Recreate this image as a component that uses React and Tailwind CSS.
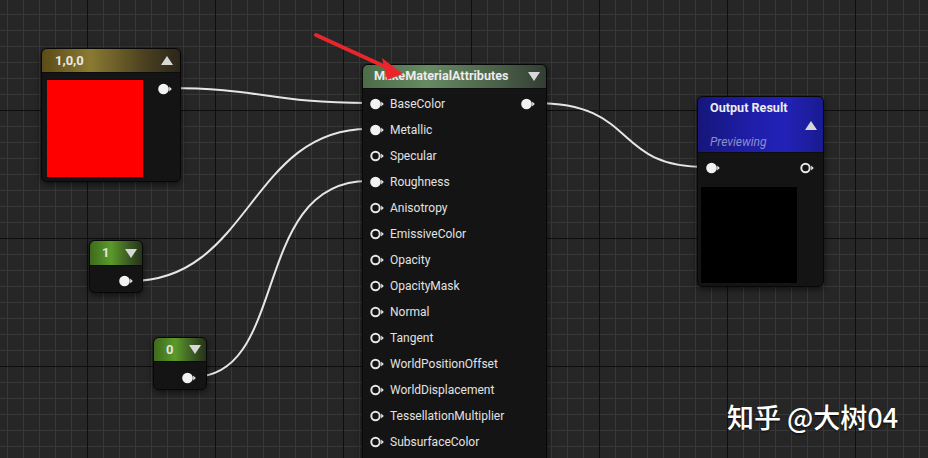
import React from "react";

const font = { fontFamily: "Roboto, 'Noto Sans', sans-serif" };

function Pin({ hollow = false }) {
  return (
    <svg width="15" height="12" viewBox="0 0 15 12" className="shrink-0">
      {hollow ? (
        <circle cx="5.5" cy="6" r="4.2" fill="none" stroke="#e6e6e6" strokeWidth="2" />
      ) : (
        <circle cx="5.5" cy="6" r="5.3" fill="#f2f2f2" />
      )}
      <polygon points="11.2,3.6 13.8,6 11.2,8.4" fill="#e6e6e6" />
    </svg>
  );
}

function Tri({ up = false }) {
  return (
    <svg width="12" height="9" viewBox="0 0 12 9">
      {up ? (
        <polygon points="6,0 12,9 0,9" fill="#d8d8d8" />
      ) : (
        <polygon points="0,0 12,0 6,9" fill="#d8d8d8" />
      )}
    </svg>
  );
}

const inputs = [
  ["BaseColor", false],
  ["Metallic", false],
  ["Specular", true],
  ["Roughness", false],
  ["Anisotropy", true],
  ["EmissiveColor", true],
  ["Opacity", true],
  ["OpacityMask", true],
  ["Normal", true],
  ["Tangent", true],
  ["WorldPositionOffset", true],
  ["WorldDisplacement", true],
  ["TessellationMultiplier", true],
  ["SubsurfaceColor", true],
];

export default function App() {
  return (
    <div
      className="relative w-[928px] h-[458px] overflow-hidden bg-[#262626] bg-[linear-gradient(to_right,#0e0e0e_1px,transparent_1px),linear-gradient(to_bottom,#0e0e0e_1px,transparent_1px),linear-gradient(to_right,#383838_1px,transparent_1px),linear-gradient(to_bottom,#383838_1px,transparent_1px)] [background-size:128px_128px,128px_128px,16px_16px,16px_16px] [background-position:87px_110px,87px_110px,7px_14px,7px_14px] text-[#e4e4e4]"
      style={font}
    >
      {/* wires */}
      <svg className="absolute inset-0" width="928" height="458">
        <g fill="none" stroke="#e6e6e6" strokeWidth="2">
          <path d="M168 88 C 260 88, 270 103, 368 103" />
          <path d="M131 281 C 250 281, 250 129, 368 129" />
          <path d="M193 377 C 290 377, 250 181, 368 181" />
          <path d="M535 103 C 640 103, 610 167, 706 167" />
        </g>
      </svg>

      {/* 1,0,0 vector node */}
      <div className="absolute left-[41px] top-[48px] w-[140px] h-[134px] rounded-[6px] bg-[#141414] border border-[#070707] shadow-[0_2px_6px_rgba(0,0,0,0.6)] overflow-hidden">
        <div className="h-[24px] flex items-center justify-between pl-[13px] pr-[7px] bg-[linear-gradient(to_right,#5b4b16,#8a7a32_35%,#4a4020_75%,#2a2618)] border-b border-[#0d0d0d]">
          <span className="text-[13px] font-bold text-[#eaeaea]">1,0,0</span>
          <Tri up />
        </div>
        <div className="flex">
          <div className="ml-[5px] mt-[7px] w-[96px] h-[97px] bg-[#ff0000]" />
          <div className="ml-[15px] mt-[10px]">
            <Pin />
          </div>
        </div>
      </div>

      {/* constant 1 */}
      <div className="absolute left-[89px] top-[240px] w-[54px] h-[53px] rounded-[6px] bg-[#141414] border border-[#070707] shadow-[0_2px_6px_rgba(0,0,0,0.6)] overflow-hidden">
        <div className="h-[25px] flex items-center justify-between pl-[12px] pr-[5px] bg-[linear-gradient(to_right,#3f6a1c,#5a9a2a_40%,#3a5a22_75%,#26321c)] border-b border-[#0d0d0d]">
          <span className="text-[13px] font-bold">1</span>
          <Tri />
        </div>
        <div className="flex justify-end pr-[8px] pt-[9px]">
          <Pin />
        </div>
      </div>

      {/* constant 0 */}
      <div className="absolute left-[153px] top-[337px] w-[54px] h-[53px] rounded-[6px] bg-[#141414] border border-[#070707] shadow-[0_2px_6px_rgba(0,0,0,0.6)] overflow-hidden">
        <div className="h-[24px] flex items-center justify-between pl-[12px] pr-[5px] bg-[linear-gradient(to_right,#3f6a1c,#5a9a2a_40%,#3a5a22_75%,#26321c)] border-b border-[#0d0d0d]">
          <span className="text-[13px] font-bold">0</span>
          <Tri />
        </div>
        <div className="flex justify-end pr-[9px] pt-[10px]">
          <Pin />
        </div>
      </div>

      {/* MakeMaterialAttributes */}
      <div className="absolute left-[362px] top-[64px] w-[185px] h-[420px] rounded-[6px] bg-[#141414] border border-[#070707] shadow-[0_2px_6px_rgba(0,0,0,0.6)] overflow-hidden">
        <div className="h-[24px] flex items-center justify-between pl-[11px] pr-[6px] bg-[linear-gradient(to_right,#4c6c48,#668a62_35%,#4a5e48_75%,#333d33)] border-b border-[#0d0d0d]">
          <span className="text-[12.6px] font-bold text-[#ececec]">MakeMaterialAttributes</span>
          <Tri />
        </div>
        <div className="pt-[2px]">
          {inputs.map(([name, hollow], i) => (
            <div key={name} className="h-[26px] flex items-center pl-[7px] pr-[10px]">
              <Pin hollow={hollow} />
              <span className="ml-[5px] text-[12px] text-[#e2e2e2]">{name}</span>
              {i === 0 && (
                <span className="ml-auto">
                  <Pin />
                </span>
              )}
            </div>
          ))}
        </div>
      </div>

      {/* Output Result */}
      <div className="absolute left-[697px] top-[96px] w-[127px] h-[191px] rounded-[6px] bg-[#141414] border border-[#070707] shadow-[0_2px_6px_rgba(0,0,0,0.6)] overflow-hidden">
        <div className="relative h-[56px] bg-[linear-gradient(to_right,#16167a,#1e1ea8_40%,#2222b8_70%,#1a1a90)] border-b border-[#0d0d0d] pl-[12px] pt-[2px]">
          <div className="text-[12.6px] font-bold text-[#ececec]">Output Result</div>
          <div className="absolute right-[6px] top-[24px]">
            <Tri up />
          </div>
          <div className="mt-[15px] text-[12px] italic text-[#8e8ec8]">Previewing</div>
        </div>
        <div className="flex items-center justify-between pl-[8px] pr-[8px] h-[26px] mt-[2px]">
          <Pin />
          <Pin hollow />
        </div>
        <div className="ml-[3px] mt-[6px] w-[96px] h-[96px] bg-black" />
      </div>

      {/* red annotation arrow */}
      <svg className="absolute inset-0 pointer-events-none" width="928" height="458">
        <line x1="316" y1="35" x2="388" y2="68" stroke="#e8262b" strokeWidth="4" strokeLinecap="round" />
        <polygon points="403,74 382,58 387,80" fill="#e8262b" />
      </svg>

      {/* watermark */}
      <div
        className="absolute left-[727px] top-[400px] text-[27px] leading-[34px] font-medium text-white [text-shadow:0_1px_2px_rgba(0,0,0,0.8)]"
        style={{ fontFamily: "'Noto Sans CJK SC', 'Noto Sans', sans-serif" }}
      >
        知乎 @大树04
      </div>
    </div>
  );
}
